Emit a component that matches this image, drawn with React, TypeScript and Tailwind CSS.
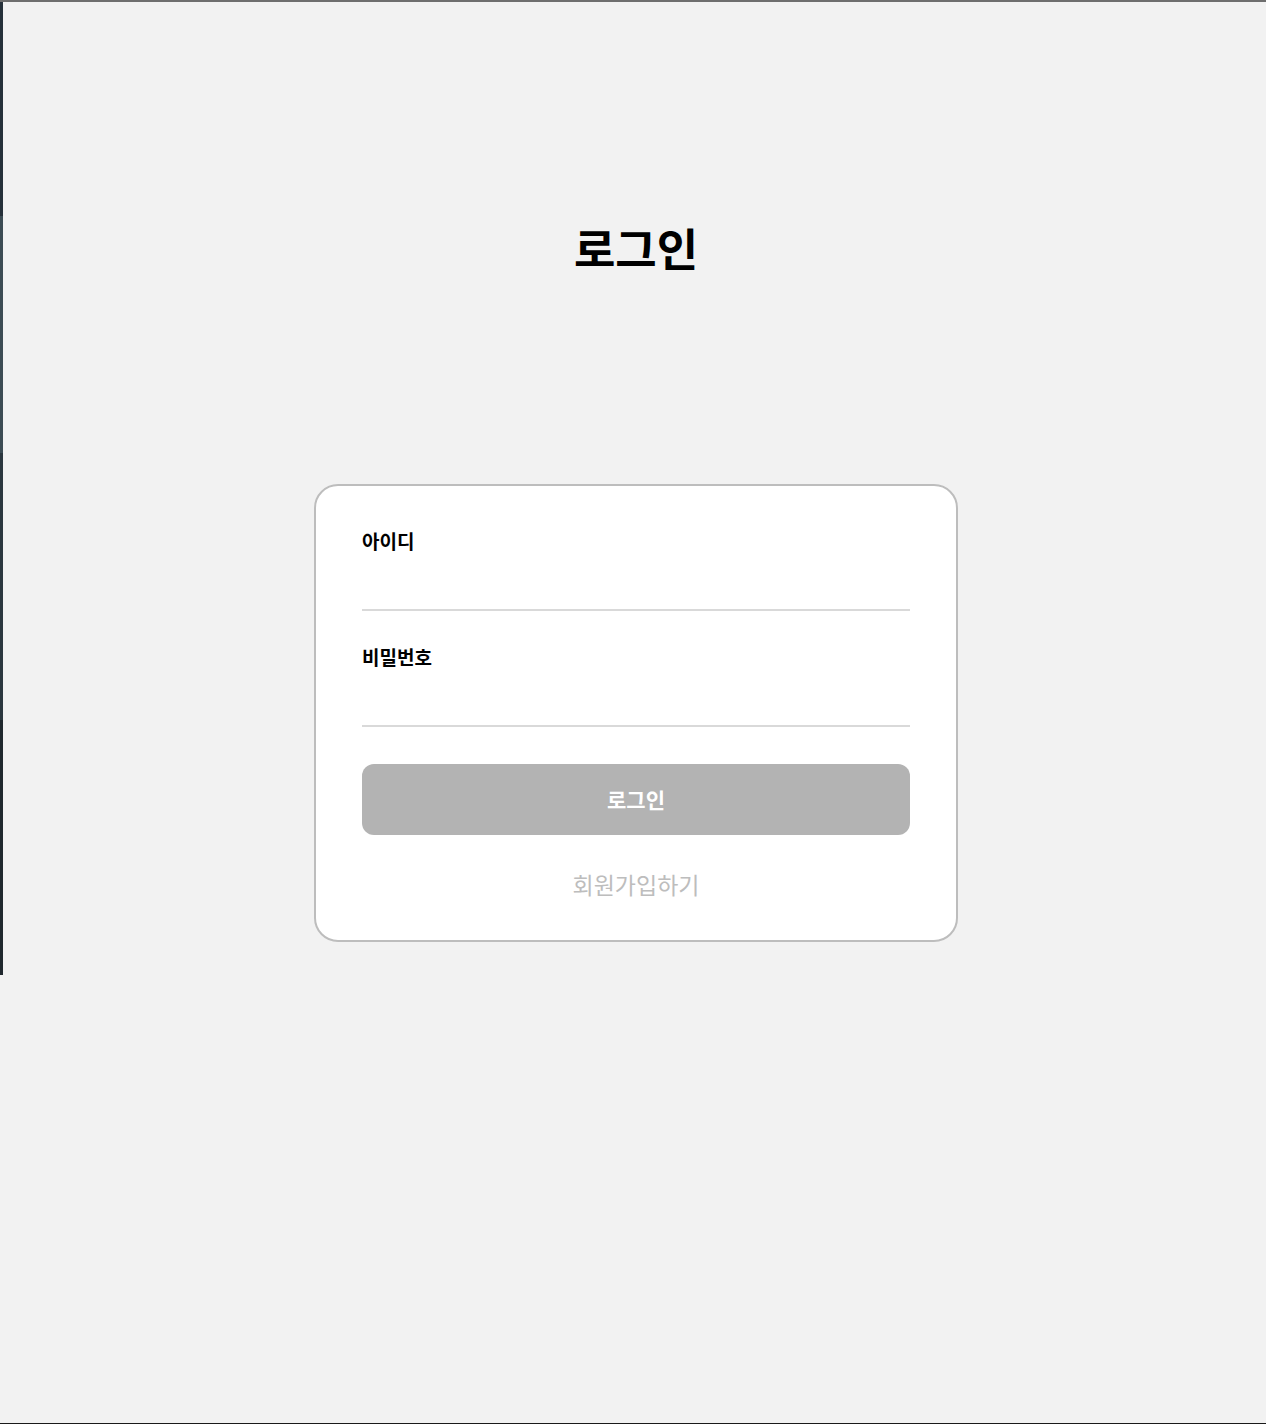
import React, { useState } from 'react'

const FONT = { fontFamily: '"Noto Sans CJK KR", "Noto Sans", sans-serif' }

function Field({ label, type }: { label: string; type: string }) {
  const [value, setValue] = useState('')
  return (
    <div className="flex flex-col">
      <label className="text-[19px] leading-[24px] font-bold text-black">{label}</label>
      <input
        type={type}
        value={value}
        onChange={e => setValue(e.target.value)}
        className="h-[58px] w-full border-b-2 border-[#d9d9d9] bg-transparent text-[18px] outline-none"
      />
    </div>
  )
}

export default function App() {
  return (
    <div className="flex h-[1424px] w-[1266px] flex-col overflow-hidden bg-[#f2f2f2]" style={FONT}>
      <div className="h-[2px] w-full shrink-0 bg-[#6e6e6e]" />
      <div className="flex flex-1">
        {/* 뒤 창이 비친 왼쪽 가장자리 */}
        <div className="flex w-[3px] shrink-0 flex-col">
          <div className="h-[214px] bg-[#26313a]" />
          <div className="h-[237px] bg-[#3c4c54]" />
          <div className="h-[267px] bg-[#2b373f]" />
          <div className="h-[255px] bg-[#20282e]" />
          <div className="flex-1 bg-[#f2f2f2]" />
        </div>

        <main className="flex flex-1 flex-col items-center pl-[3px]">
          <h1 className="mt-[221px] text-[45px] leading-[50px] font-bold text-black">로그인</h1>

          <form
            className="mt-[211px] flex w-[644px] flex-col rounded-[24px] border-2 border-[#bdbdbd] bg-white px-[46px] pt-[43px] pb-[42px]"
            onSubmit={e => e.preventDefault()}
          >
            <Field label="아이디" type="text" />
            <div className="h-[34px]" />
            <Field label="비밀번호" type="password" />
            <button
              type="submit"
              className="mt-[37px] h-[71px] w-full rounded-[12px] bg-[#b3b3b3] text-[21px] font-bold text-white"
            >
              로그인
            </button>
            <a href="#" className="mt-[35px] self-center text-[23px] leading-[28px] text-[#bdbdbd]">
              회원가입하기
            </a>
          </form>
        </main>
      </div>
      <div className="h-[1px] w-full shrink-0 bg-[#1a1a1a]" />
    </div>
  )
}
